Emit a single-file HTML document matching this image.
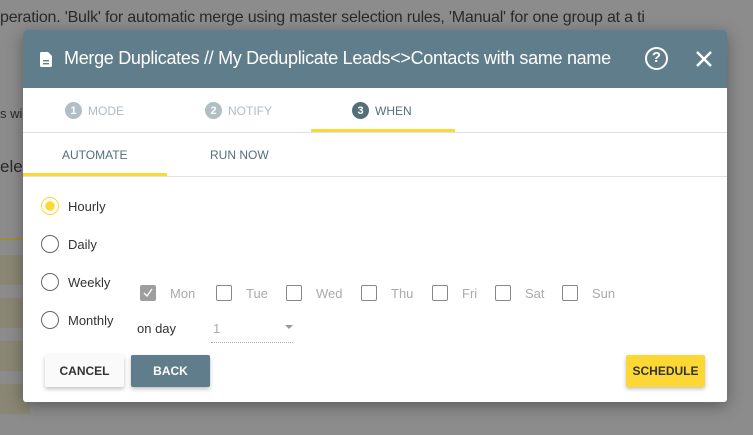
<!DOCTYPE html>
<html><head><style>
*{box-sizing:border-box;margin:0;padding:0}
body{width:753px;height:435px;overflow:hidden;background:#8c8c8c;font-family:"Liberation Sans",sans-serif;position:relative}
.abs{position:absolute}
.bgtext{color:#2a2a2a;font-size:16px}
.dlg{left:23px;top:30px;width:704px;height:372px;background:#fff;border-radius:3px;box-shadow:0 4px 16px rgba(0,0,0,.35);overflow:hidden}
.hdr{left:0;top:0;width:704px;height:58px;background:#607d8b;color:#fff}
.step{font-size:12px;color:#b0bbc0;display:flex;align-items:center;gap:6px}
.num{width:17px;height:17px;border-radius:50%;background:#b0bec5;color:#fff;font-size:11px;font-weight:bold;display:flex;align-items:center;justify-content:center}
.radio{width:18px;height:18px;border-radius:50%;border:1.5px solid #666}
.lbl{font-size:13px;color:#333}
.cb{width:16px;height:16px;border:1.5px solid #888;border-radius:2px}
.day{font-size:13px;color:#aaa}
.btn{height:32px;font-size:12px;font-weight:bold;display:flex;align-items:center;justify-content:center;border-radius:2px;box-shadow:0 2px 4px rgba(0,0,0,.25)}
</style></head><body>
<div class="abs bgtext" style="left:0;top:9px;white-space:nowrap;letter-spacing:-0.2px">peration. 'Bulk' for automatic merge using master selection rules, 'Manual' for one group at a ti</div>
<div class="abs bgtext" style="left:0;top:106px;font-size:13px">s wi</div>
<div class="abs bgtext" style="left:0;top:157px;font-size:17px">elec</div>
<div class="abs" style="left:0;top:238px;width:23px;height:2px;background:#a08d3a"></div>
<div class="abs" style="left:0;top:255px;width:30px;height:30px;background:#8a8674"></div>
<div class="abs" style="left:0;top:298px;width:30px;height:30px;background:#8a8674"></div>
<div class="abs" style="left:0;top:341px;width:30px;height:30px;background:#8a8674"></div>
<div class="abs" style="left:0;top:384px;width:30px;height:30px;background:#8a8674"></div>
<div class="abs dlg">
 <div class="abs hdr">
  <svg class="abs" style="left:17px;top:22px" width="12" height="15" viewBox="0 0 12 15"><path d="M0 1.5Q0 0 1.5 0H8L12 4V13.5Q12 15 10.5 15H1.5Q0 15 0 13.5Z" fill="#fff"/><rect x="3" y="8" width="6" height="1.4" fill="#607d8b"/><rect x="3" y="11" width="6" height="1.4" fill="#607d8b"/></svg>
  <div class="abs" style="left:41px;top:18px;font-size:18px;white-space:nowrap;width:560px;overflow:hidden;letter-spacing:-0.3px">Merge Duplicates // My Deduplicate Leads&lt;&gt;Contacts with same name</div>
  <div class="abs" style="left:622px;top:17px;width:23px;height:23px;border:2.5px solid #fff;border-radius:50%;font-size:15px;font-weight:bold;text-align:center;line-height:18px">?</div>
  <svg class="abs" style="left:673px;top:21px" width="16" height="16" viewBox="0 0 16 16"><path d="M1 1L15 15M15 1L1 15" stroke="#fff" stroke-width="2.5"/></svg>
 </div>
 <div class="abs step" style="left:42px;top:72px"><div class="num">1</div>MODE</div>
 <div class="abs step" style="left:182px;top:72px"><div class="num">2</div>NOTIFY</div>
 <div class="abs step" style="left:329px;top:72px;color:#546e7a"><div class="num" style="background:#546e7a">3</div>WHEN</div>
 <div class="abs" style="left:288px;top:99px;width:144px;height:3px;background:#fdd835"></div>
 <div class="abs" style="left:0;top:102px;width:704px;height:1px;background:#e0e0e0"></div>
 <div class="abs" style="left:39px;top:118px;font-size:12px;color:#546e7a">AUTOMATE</div>
 <div class="abs" style="left:187px;top:118px;font-size:12px;color:#546e7a">RUN NOW</div>
 <div class="abs" style="left:0;top:143px;width:144px;height:3px;background:#fdd835"></div>
 <div class="abs" style="left:0;top:146px;width:704px;height:1px;background:#e0e0e0"></div>
 <div class="abs radio" style="left:18px;top:167px;border-color:#fdd835;background:radial-gradient(circle,#fdd835 4.5px,#fff 5px)"></div>
 <div class="abs lbl" style="left:45px;top:169px">Hourly</div>
 <div class="abs radio" style="left:18px;top:205px"></div>
 <div class="abs lbl" style="left:45px;top:207px">Daily</div>
 <div class="abs radio" style="left:18px;top:243px"></div>
 <div class="abs lbl" style="left:45px;top:245px">Weekly</div>
 <div class="abs radio" style="left:18px;top:281px"></div>
 <div class="abs lbl" style="left:45px;top:283px">Monthly</div>
 <div class="abs cb" style="left:117px;top:255px;background:#9e9e9e;border-color:#9e9e9e"><svg width="14" height="14" viewBox="0 0 14 14"><path d="M3 7L6 10L11 3" stroke="#fff" stroke-width="1.3" fill="none"/></svg></div>
 <div class="abs day" style="left:147px;top:256px">Mon</div>
 <div class="abs cb" style="left:193px;top:255px"></div><div class="abs day" style="left:223px;top:256px">Tue</div>
 <div class="abs cb" style="left:263px;top:255px"></div><div class="abs day" style="left:293px;top:256px">Wed</div>
 <div class="abs cb" style="left:338px;top:255px"></div><div class="abs day" style="left:368px;top:256px">Thu</div>
 <div class="abs cb" style="left:409px;top:255px"></div><div class="abs day" style="left:439px;top:256px">Fri</div>
 <div class="abs cb" style="left:472px;top:255px"></div><div class="abs day" style="left:502px;top:256px">Sat</div>
 <div class="abs cb" style="left:539px;top:255px"></div><div class="abs day" style="left:569px;top:256px">Sun</div>
 <div class="abs lbl" style="left:114px;top:291px">on day</div>
 <div class="abs day" style="left:190px;top:291px">1</div>
 <div class="abs" style="left:262px;top:295px;width:0;height:0;border-left:4px solid transparent;border-right:4px solid transparent;border-top:4px solid #999"></div>
 <div class="abs" style="left:188px;top:312px;width:82px;border-top:1px dotted #aaa"></div>
 <div class="abs btn" style="left:22px;top:325px;width:79px;background:#fafafa;color:#333">CANCEL</div>
 <div class="abs btn" style="left:108px;top:325px;width:79px;background:#607d8b;color:#fff">BACK</div>
 <div class="abs btn" style="left:603px;top:325px;width:79px;background:#fdd835;color:#333">SCHEDULE</div>
</div>
</body></html>
